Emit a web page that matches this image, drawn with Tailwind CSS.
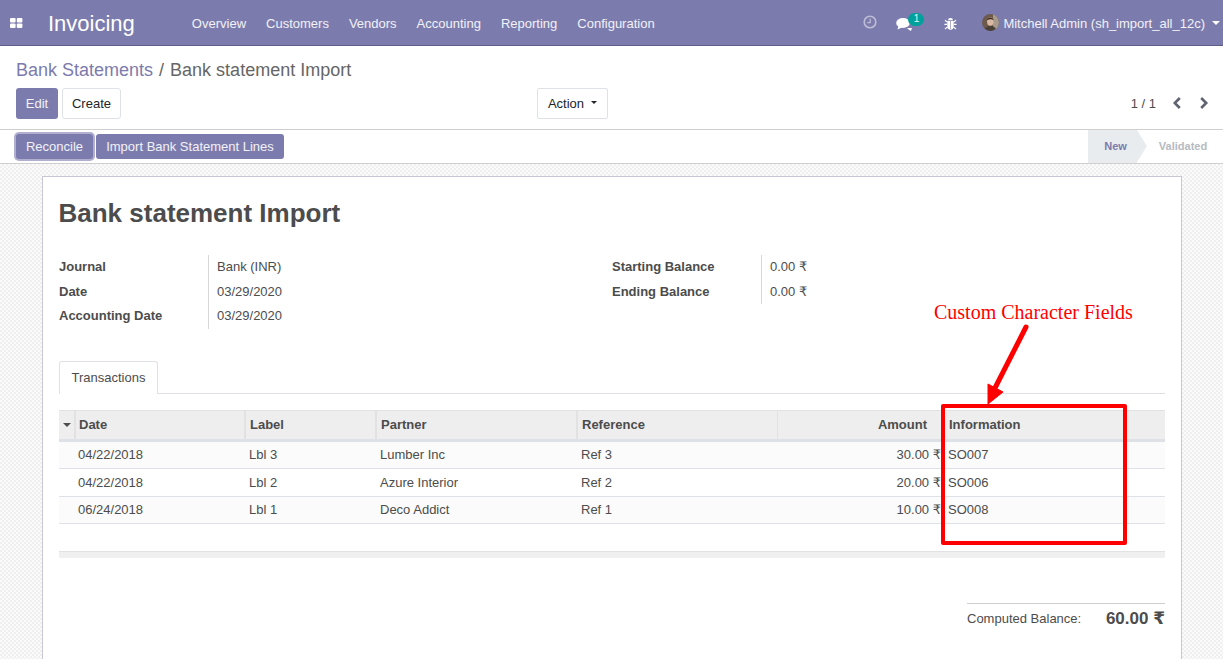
<!DOCTYPE html>
<html lang="en">
<head>
    <meta charset="UTF-8">
    <title>Bank statement Import</title>
    <script src="https://cdn.jsdelivr.net/npm/@tailwindcss/browser@4"></script>
</head>
<body class="relative h-[659px] w-[1223px] overflow-hidden bg-white font-['Liberation_Sans',sans-serif] text-[13px] text-[#4c4c4c]">

    <!-- Navbar -->
    <nav class="flex h-[46px] items-center border-b border-[#5f5b8a] bg-[#7c7bad] pt-[2px] text-white">
        <svg class="mb-[2px] ml-[10px] h-[12px] w-[13px]" viewBox="0 0 13 12" fill="#fff"><rect x="0" y="1" width="5.6" height="4.4" rx="1"/><rect x="6.8" y="1" width="5.6" height="4.4" rx="1"/><rect x="0" y="6.6" width="5.6" height="4.4" rx="1"/><rect x="6.8" y="6.6" width="5.6" height="4.4" rx="1"/></svg>
        <span class="ml-[25px] text-[22px] leading-none">Invoicing</span>
        <div class="ml-[57px] flex gap-[20px] text-[13px] text-white/90">
            <a>Overview</a>
            <a>Customers</a>
            <a>Vendors</a>
            <a>Accounting</a>
            <a>Reporting</a>
            <a>Configuration</a>
        </div>
        <div class="ml-auto flex items-center">
            <svg class="mb-[3px] h-[14px] w-[14px]" viewBox="0 0 14 14" fill="none" stroke="#fff" stroke-opacity=".5" stroke-width="1.6"><circle cx="7" cy="7" r="5.8"/><path d="M7.2 3.5V7.6H4.2" stroke-width="1.2"/></svg>
            <div class="relative ml-[19px] h-[16px] w-[18px]">
                <svg class="mt-[1px] h-[15px] w-[17px]" viewBox="0 0 17 15" fill="#fff"><ellipse cx="7" cy="6" rx="6.8" ry="5"/><path d="M2.5 9 1.5 12.5 6 10.5ZM11 11h5l-1 3-2.5-1.5Z"/></svg>
                <span class="absolute -top-[3px] left-[12px] flex h-[13px] w-[16px] items-center justify-center rounded-full bg-[#00a09d] text-[10px] leading-none text-white/90">1</span>
            </div>
            <svg class="ml-[30px] h-[13px] w-[13px]" viewBox="0 0 13 13" fill="#fff"><path d="M4 3.2a2.5 2.2 0 0 1 5 0ZM3.3 4h6.4v5a3.2 3.8 0 0 1-6.4 0Z"/><path d="M3.3 5 1 3.2M9.7 5 12 3.2M3.2 7.4H.4M9.8 7.4h2.8M3.5 9.8 1 12M9.5 9.8l2.5 2.2" stroke="#fff" stroke-width="1.1"/><path d="M6.2 4h.6v8h-.6Z" fill="#7c7bad"/></svg>
            <svg class="mb-[2px] ml-[25px] h-[17px] w-[17px] rounded-full" viewBox="0 0 17 17"><rect width="17" height="17" fill="#6d5a4b"/><rect x="11" width="6" height="17" fill="#a89a8c"/><ellipse cx="8.3" cy="7.5" rx="3.3" ry="4.2" fill="#d9b8a4"/><path d="M4.8 6.5C5 2.5 11.5 2.5 11.8 6.5 10 4.8 7 4.8 4.8 6.5Z" fill="#3d2c22"/><path d="M2.5 17c.5-4 3-5 6-5s5 1 6 5Z" fill="#4a4038"/></svg>
            <span class="ml-[4px] text-white/90">Mitchell Admin (sh_import_all_12c)</span>
            <span class="mb-[2px] ml-[7px] mr-[3px] h-0 w-0 border-x-[4px] border-t-[4px] border-x-transparent border-t-white"></span>
        </div>
    </nav>

    <!-- Control panel -->
    <div class="h-[84px] border-b border-[#cfcfcf] px-[16px]">
        <div class="flex h-[42px] items-end pb-[6px] text-[18px] leading-[24px]">
            <a class="text-[#7c7bad]">Bank Statements</a>
            <span class="mx-[6px] text-[#666]">/</span>
            <span class="text-[#666]">Bank statement Import</span>
        </div>
        <div class="flex items-start">
            <button class="h-[31px] w-[42px] rounded-[3px] bg-[#7c7bad] text-white/90">Edit</button>
            <button class="ml-[4px] h-[31px] w-[59px] rounded-[3px] border border-[#dee2e6] text-[#212529]">Create</button>
            <button class="ml-[416px] flex h-[31px] w-[71px] items-center justify-center rounded-[2px] border border-[#dee2e6] text-[#212529]">Action<span class="mb-[2px] ml-[7px] h-0 w-0 border-x-[3.5px] border-t-[3.5px] border-x-transparent border-t-[#212529]"></span></button>
            <div class="-mr-[2px] ml-auto flex h-[31px] items-center text-[#4c4c4c]">
                <span>1 / 1</span>
                <svg class="mb-[2px] ml-[16px] h-[12px] w-[10px]" viewBox="0 0 10 12" fill="none" stroke="#5f6470" stroke-width="2.6"><path d="M7.8 1 2.8 6l5 5"/></svg>
                <svg class="mb-[2px] ml-[17px] h-[12px] w-[10px]" viewBox="0 0 10 12" fill="none" stroke="#5f6470" stroke-width="2.6"><path d="M2.2 1l5 5-5 5"/></svg>
            </div>
        </div>
    </div>

    <!-- Status bar -->
    <div class="flex h-[34px] items-center justify-between border-b border-[#cfcfcf] pl-[16px]">
        <div class="flex items-center gap-[2px]">
            <button class="h-[25px] w-[77px] rounded-[3px] bg-[#7c7bad] text-white/90 ring-2 ring-[#b0afd0]">Reconcile</button>
            <button class="ml-[1px] h-[25px] w-[188px] rounded-[3px] bg-[#7c7bad] text-white/90">Import Bank Statement Lines</button>
        </div>
        <div class="flex h-full items-stretch text-[11px] font-bold">
            <div class="relative flex w-[49px] items-center justify-center bg-[#e9ecef] pl-[6px] text-[#7c7bad]">New
                <span class="absolute -right-[10px] top-0 h-0 w-0 border-y-[16.5px] border-l-[10px] border-y-transparent border-l-[#e9ecef]"></span>
            </div>
            <div class="flex w-[86px] items-center justify-center pl-[6px] text-[#b6bac1]">Validated</div>
        </div>
    </div>

    <!-- Form sheet -->
    <div class="h-[495px] bg-[repeating-conic-gradient(#efefef_0_25%,#fbfbfb_0_50%)] bg-size-[4px_4px] pl-[42px] pr-[41px] pt-[12px]">
        <div class="h-[490px] border border-[#c8c8d4] bg-white px-[16px]">
            <h1 class="-ml-[0.5px] mt-[21px] text-[26px] font-bold leading-[30px] text-[#4c4c4c]">Bank statement Import</h1>

            <div class="mt-[27px] flex items-start">
                <div class="flex w-[553px]">
                    <div class="w-[149px] font-bold leading-[24.5px] text-[#4c4c4c]">
                        <div>Journal</div>
                        <div>Date</div>
                        <div>Accounting Date</div>
                    </div>
                    <div class="border-l border-[#d8d8d8] pl-[8px] leading-[24.5px]">
                        <div>Bank (INR)</div>
                        <div>03/29/2020</div>
                        <div>03/29/2020</div>
                    </div>
                </div>
                <div class="flex">
                    <div class="w-[149px] font-bold leading-[24.5px]">
                        <div>Starting Balance</div>
                        <div>Ending Balance</div>
                    </div>
                    <div class="border-l border-[#d8d8d8] pl-[8px] leading-[24.5px]">
                        <div>0.00 <span class="font-['DejaVu_Sans']">₹</span></div>
                        <div>0.00 <span class="font-['DejaVu_Sans']">₹</span></div>
                    </div>
                </div>
            </div>

            <!-- Tabs -->
            <div class="mt-[32px] flex h-[33px] border-b border-[#dee2e6]">
                <div class="h-[33px] w-[99px] rounded-t-[3px] border border-b-0 border-[#dee2e6] bg-white pt-[6px] text-center">Transactions</div>
            </div>

            <!-- Lines -->
            <table class="mt-[16px] w-[1106px] table-fixed border-collapse">
                <thead>
                    <tr class="h-[30px] border-y border-[#e2e2e2] bg-[#eeeeee] text-left font-bold">
                        <th class="w-[16px] border-r-2 border-[#e2e2e2]"><span class="mb-[2px] ml-[4px] inline-block h-0 w-0 border-x-[4px] border-t-[4px] border-x-transparent border-t-[#4c4c4c]"></span></th>
                        <th class="w-[170px] border-r-2 border-[#e2e2e2] pl-[3px]">Date</th>
                        <th class="w-[131px] border-r-2 border-[#e2e2e2] pl-[4px]">Label</th>
                        <th class="w-[201px] border-r-2 border-[#e2e2e2] pl-[4px]">Partner</th>
                        <th class="w-[200px] border-r border-[#e2e2e2] pl-[4px]">Reference</th>
                        <th class="w-[168px] pr-[18px] text-right">Amount</th>
                        <th class="pl-[4px]">Information</th>
                    </tr>
                </thead>
                <tbody>
                    <tr class="h-[28px] border-t-[3px] border-[#dee2e6] bg-[#fbfbfb]">
                        <td></td><td class="pl-[3px]">04/22/2018</td><td class="pl-[4px]">Lbl 3</td><td class="pl-[4px]">Lumber Inc</td><td class="pl-[4px]">Ref 3</td><td class="pr-[4px] text-right">30.00 <span class="font-['DejaVu_Sans']">₹</span></td><td class="pl-[3px]">SO007</td>
                    </tr>
                    <tr class="h-[28px] border-t border-[#dee2e6] bg-white">
                        <td></td><td class="pl-[3px] pt-[2px]">04/22/2018</td><td class="pl-[4px] pt-[2px]">Lbl 2</td><td class="pl-[4px] pt-[2px]">Azure Interior</td><td class="pl-[4px] pt-[2px]">Ref 2</td><td class="pr-[4px] pt-[2px] text-right">20.00 <span class="font-['DejaVu_Sans']">₹</span></td><td class="pl-[3px] pt-[2px]">SO006</td>
                    </tr>
                    <tr class="h-[27px] border-y border-[#dee2e6] bg-[#fbfbfb]">
                        <td></td><td class="pl-[3px]">06/24/2018</td><td class="pl-[4px]">Lbl 1</td><td class="pl-[4px]">Deco Addict</td><td class="pl-[4px]">Ref 1</td><td class="pr-[4px] text-right">10.00 <span class="font-['DejaVu_Sans']">₹</span></td><td class="pl-[3px]">SO008</td>
                    </tr>
                </tbody>
            </table>
            <div class="mt-[27px] h-[7px] w-[1106px] border-t border-[#e2e2e2] bg-[#f0f0f0]"></div>

            <!-- Total -->
            <div class="ml-[908px] mt-[45px] flex h-[30px] w-[198px] items-center border-t border-[#cfcfcf] pt-[2px]">
                <span>Computed Balance:</span>
                <span class="ml-auto text-[17px] font-bold">60.00 <span class="font-['DejaVu_Sans']">₹</span></span>
            </div>
        </div>
    </div>

    <!-- Red annotation over the screenshot -->
    <div class="absolute left-[941px] top-[404px] h-[141px] w-[186px] rounded-[2px] border-[4px] border-[#ff0000]"></div>
    <svg class="absolute left-[980px] top-[320px] h-[90px] w-[55px]" viewBox="0 0 55 90" fill="#ff0000"><path d="M46 7 15 68" stroke="#ff0000" stroke-width="5" stroke-linecap="round"/><path d="M8 84 8 64 23 72Z" stroke="#ff0000"/></svg>
    <div class="absolute left-[934px] top-[300px] font-['Liberation_Serif',serif] text-[20px] leading-[24px] text-[#ff0000]">Custom Character Fields</div>

</body>
</html>
